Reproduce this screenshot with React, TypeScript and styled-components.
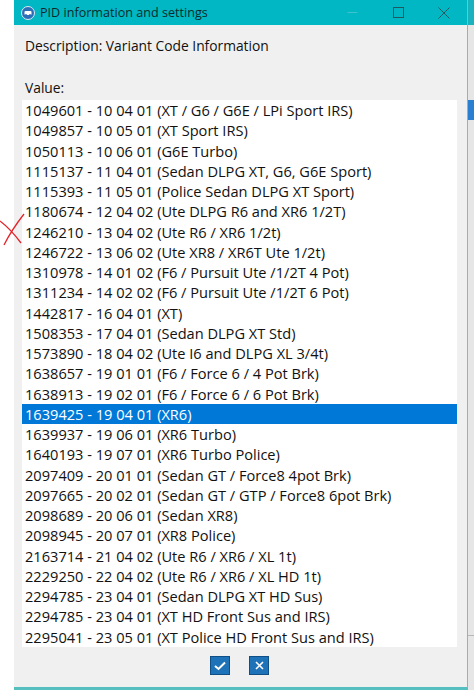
import styled, { createGlobalStyle } from 'styled-components';

const GlobalStyle = createGlobalStyle`
    html, body {
        margin: 0;
        padding: 0;
        background: #ffffff;
    }
    body {
        font-family: "Open Sans", "Noto Sans", "DejaVu Sans", sans-serif;
    }
`;

const Page = styled.div`
    position: relative;
    display: flex;
    width: 474px;
    height: 690px;
    overflow: hidden;
`;

const Gutter = styled.div`
    width: 14px;
    flex-shrink: 0;
    background: #ffffff;
`;

const Window = styled.div`
    width: 453px;
    display: flex;
    flex-direction: column;
    background: #f0f0f0;
    border-right: 1px solid #6cc4c4;
    border-bottom: 3px solid #55bfc0;
`;

const TitleBar = styled.div`
    height: 25px;
    flex-shrink: 0;
    display: flex;
    align-items: center;
    background: #00b7c3;
    padding-left: 7px;
`;

const AppIcon = styled.div`
    width: 14px;
    height: 14px;
    border-radius: 50%;
    background: #2c6fb8;
    border: 1px solid #dfe9f5;
    box-sizing: border-box;
    display: flex;
    align-items: center;
    justify-content: center;
    margin-right: 5px;
`;

const Title = styled.span`
    font-size: 12.6px;
    color: #0c2a2d;
    flex: 1;
    white-space: nowrap;
`;

const Caption = styled.div<{ $w: number }>`
    width: ${(p) => p.$w}px;
    height: 25px;
    display: flex;
    align-items: center;
    justify-content: center;
`;

const Body = styled.div`
    flex: 1;
    display: flex;
    flex-direction: column;
    padding: 0 10px 0 8px;
`;

const Label = styled.div<{ $top: number }>`
    font-size: 13.8px;
    color: #111111;
    margin-top: ${(p) => p.$top}px;
    padding-left: 3px;
    line-height: 20px;
    white-space: nowrap;
`;

const List = styled.div`
    margin-top: 2px;
    height: 547px;
    background: #ffffff;
    display: flex;
    flex-direction: column;
`;

const Row = styled.div<{ $selected?: boolean }>`
    height: 20.25px;
    line-height: 20.25px;
    padding-left: 3px;
    font-size: 14.6px;
    white-space: nowrap;
    color: ${(p) => (p.$selected ? '#ffffff' : '#111111')};
    background: ${(p) => (p.$selected ? '#0078d7' : 'transparent')};
`;

const Footer = styled.div`
    flex: 1;
    display: flex;
    justify-content: center;
    align-items: flex-start;
    gap: 19px;
    padding-top: 9px;
`;

const IconButton = styled.button`
    width: 20px;
    height: 19px;
    padding: 0;
    border: 1px solid #0f4f86;
    background: #1e72b8;
    display: flex;
    align-items: center;
    justify-content: center;
    cursor: pointer;
`;

const RightStrip = styled.div`
    flex: 1;
    display: flex;
    flex-direction: column;
    background: #e6e6e6;
`;

const StripTop = styled.div`
    height: 25px;
    background: #1ab3bd;
`;

const StripBlue = styled.div`
    margin-top: 75px;
    height: 20px;
    background: #2a7fd0;
`;

const StripGap = styled.div`
    height: 515px;
    border-bottom: 1px solid #b8b8b8;
`;

const Mark = styled.svg`
    position: absolute;
    left: 0;
    top: 212px;
`;

const rows = [
    '1049601 - 10 04 01 (XT / G6 / G6E / LPi Sport IRS)',
    '1049857 - 10 05 01 (XT Sport IRS)',
    '1050113 - 10 06 01 (G6E Turbo)',
    '1115137 - 11 04 01 (Sedan DLPG XT, G6, G6E Sport)',
    '1115393 - 11 05 01 (Police Sedan DLPG XT Sport)',
    '1180674 - 12 04 02 (Ute DLPG R6 and XR6 1/2T)',
    '1246210 - 13 04 02 (Ute R6 / XR6 1/2t)',
    '1246722 - 13 06 02 (Ute XR8 / XR6T Ute 1/2t)',
    '1310978 - 14 01 02 (F6 / Pursuit Ute /1/2T 4 Pot)',
    '1311234 - 14 02 02 (F6 / Pursuit Ute /1/2T 6 Pot)',
    '1442817 - 16 04 01 (XT)',
    '1508353 - 17 04 01 (Sedan DLPG XT Std)',
    '1573890 - 18 04 02 (Ute I6 and DLPG XL  3/4t)',
    '1638657 - 19 01 01 (F6 / Force 6 / 4 Pot Brk)',
    '1638913 - 19 02 01 (F6 / Force 6 / 6 Pot Brk)',
    '1639425 - 19 04 01 (XR6)',
    '1639937 - 19 06 01 (XR6 Turbo)',
    '1640193 - 19 07 01 (XR6 Turbo Police)',
    '2097409 - 20 01 01 (Sedan GT / Force8 4pot Brk)',
    '2097665 - 20 02 01 (Sedan GT / GTP / Force8 6pot Brk)',
    '2098689 - 20 06 01 (Sedan XR8)',
    '2098945 - 20 07 01 (XR8 Police)',
    '2163714 - 21 04 02 (Ute R6 / XR6 / XL 1t)',
    '2229250 - 22 04 02 (Ute R6 / XR6 / XL HD 1t)',
    '2294785 - 23 04 01 (Sedan DLPG XT HD Sus)',
    '2294785 - 23 04 01 (XT HD Front Sus and IRS)',
    '2295041 - 23 05 01 (XT Police HD Front Sus and IRS)',
];

const SELECTED = 15;

export default function App() {
    return (
        <>
            <GlobalStyle />
            <Page>
                <Gutter />
                <Window>
                    <TitleBar>
                        <AppIcon>
                            <svg width="8" height="6" viewBox="0 0 8 6">
                                <rect x="0.5" y="1" width="7" height="4" rx="1" fill="#ffffff" />
                                <circle cx="2" cy="5" r="0.9" fill="#2c6fb8" />
                                <circle cx="6" cy="5" r="0.9" fill="#2c6fb8" />
                            </svg>
                        </AppIcon>
                        <Title>PID information and settings</Title>
                        <Caption $w={46}>
                            <svg width="11" height="11" viewBox="0 0 11 11">
                                <line x1="0.5" y1="5.5" x2="10.5" y2="5.5" stroke="#3fc3cc" strokeWidth="1" />
                            </svg>
                        </Caption>
                        <Caption $w={46}>
                            <svg width="11" height="11" viewBox="0 0 11 11">
                                <rect x="0.5" y="0.5" width="10" height="10" fill="none" stroke="#1d5a60" strokeWidth="1" />
                            </svg>
                        </Caption>
                        <Caption $w={46}>
                            <svg width="12" height="12" viewBox="0 0 12 12">
                                <path d="M0.5 0.5 L11.5 11.5 M11.5 0.5 L0.5 11.5" stroke="#1d5a60" strokeWidth="1" />
                            </svg>
                        </Caption>
                    </TitleBar>
                    <Body>
                        <Label $top={11}>Description: Variant Code Information</Label>
                        <Label $top={22}>Value:</Label>
                        <List>
                            {rows.map((r, i) => (
                                <Row key={i} $selected={i === SELECTED}>
                                    {r}
                                </Row>
                            ))}
                        </List>
                        <Footer>
                            <IconButton aria-label="OK">
                                <svg width="12" height="10" viewBox="0 0 12 10">
                                    <path d="M1 5 L4.5 8 L11 1.5" fill="none" stroke="#ffffff" strokeWidth="2" />
                                </svg>
                            </IconButton>
                            <IconButton aria-label="Cancel">
                                <svg width="9" height="9" viewBox="0 0 9 9">
                                    <path d="M1 1 L8 8 M8 1 L1 8" stroke="#ffffff" strokeWidth="1.6" />
                                </svg>
                            </IconButton>
                        </Footer>
                    </Body>
                </Window>
                <RightStrip>
                    <StripTop />
                    <StripBlue />
                    <StripGap />
                </RightStrip>
                <Mark width="26" height="36" viewBox="0 0 26 36">
                    <path d="M24 2 C17 11 10 21 4 33" fill="none" stroke="#e3242b" strokeWidth="1.3" />
                    <path d="M0 9 C8 15 15 23 21 31" fill="none" stroke="#e3242b" strokeWidth="1.3" />
                </Mark>
            </Page>
        </>
    );
}
